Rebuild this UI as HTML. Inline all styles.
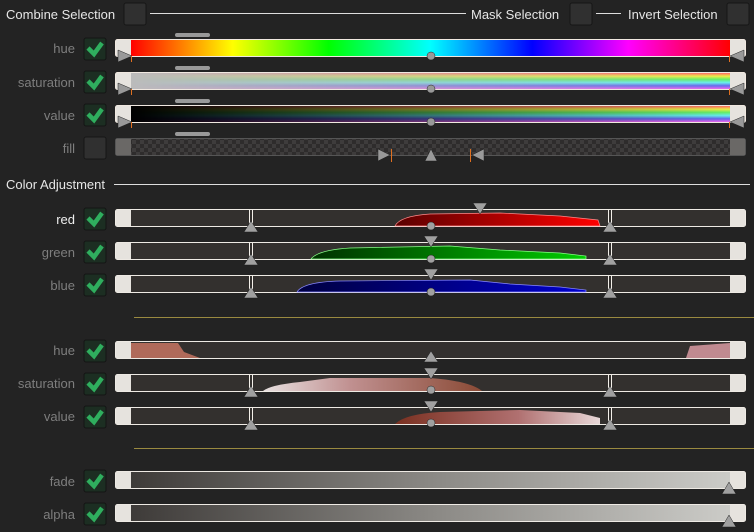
<!DOCTYPE html>
<html><head><meta charset="utf-8"><style>
html,body{margin:0;padding:0;background:#232323;width:754px;height:532px;overflow:hidden}
svg{display:block}
text{font-family:"Liberation Sans",sans-serif;font-size:13px}
</style></head><body>
<svg width="754" height="532" viewBox="0 0 754 532" xmlns="http://www.w3.org/2000/svg">
<defs>
<linearGradient id="hue" x1="0" x2="1"><stop offset="0" stop-color="#f00"/><stop offset=".17" stop-color="#ff0"/><stop offset=".33" stop-color="#0f0"/><stop offset=".5" stop-color="#0ff"/><stop offset=".67" stop-color="#00f"/><stop offset=".83" stop-color="#f0f"/><stop offset="1" stop-color="#f00"/></linearGradient>
<linearGradient id="rb" x1="0" y1="0" x2="0" y2="1"><stop offset="0" stop-color="#f66"/><stop offset=".2" stop-color="#ee4"/><stop offset=".4" stop-color="#6e6"/><stop offset=".6" stop-color="#6ee"/><stop offset=".8" stop-color="#66e"/><stop offset="1" stop-color="#e6e"/></linearGradient>
<linearGradient id="fadeL" x1="0" x2="1"><stop offset="0" stop-color="#bbb"/><stop offset="1" stop-color="#bbb" stop-opacity="0"/></linearGradient>
<linearGradient id="blk" x1="0" x2="1"><stop offset="0" stop-color="#000"/><stop offset="1" stop-color="#000" stop-opacity="0"/></linearGradient>
<linearGradient id="gray" x1="0" x2="1"><stop offset="0" stop-color="#3a3735"/><stop offset=".5" stop-color="#8a8884"/><stop offset="1" stop-color="#cfcfcb"/></linearGradient>
<linearGradient id="rd" x1="0" x2="1"><stop offset="0" stop-color="#5a0000"/><stop offset="1" stop-color="#f00"/></linearGradient>
<linearGradient id="gr" x1="0" x2="1"><stop offset="0" stop-color="#003000"/><stop offset="1" stop-color="#0c0"/></linearGradient>
<linearGradient id="bl" x1="0" x2="1"><stop offset="0" stop-color="#000040"/><stop offset="1" stop-color="#00c"/></linearGradient>
<linearGradient id="pk" x1="0" x2="1"><stop offset="0" stop-color="#7a3020"/><stop offset=".6" stop-color="#b07070"/><stop offset="1" stop-color="#e8d8d8"/></linearGradient>
<linearGradient id="pk2" x1="0" x2="1"><stop offset="0" stop-color="#e8e0e0"/><stop offset=".4" stop-color="#c09090"/><stop offset="1" stop-color="#8a4a35"/></linearGradient>
<pattern id="chk" width="8" height="8" patternUnits="userSpaceOnUse"><rect width="8" height="8" fill="#2e2c2c"/><rect width="4" height="4" fill="#3e3c3c"/><rect x="4" y="4" width="4" height="4" fill="#3e3c3c"/></pattern>
<g id="cb"><rect width="22" height="22" rx="2" fill="#1c2e22" stroke="#141414"/><path d="M4 10 L10 16 L18 5" stroke="#2fae5e" stroke-width="4.5" fill="none"/></g>
<g id="ub"><rect width="22" height="22" rx="2" fill="#303030" stroke="#161616"/></g>
</defs>

<text x="6" y="19" fill="#e6e6e6">Combine Selection</text>
<use href="#ub" x="124" y="3"/>
<line x1="150" y1="13.5" x2="466" y2="13.5" stroke="#ddd"/>
<text x="471" y="19" fill="#e6e6e6">Mask Selection</text>
<use href="#ub" x="570" y="3"/>
<line x1="596" y1="13.5" x2="621" y2="13.5" stroke="#ddd"/>
<text x="628" y="19" fill="#e6e6e6">Invert Selection</text>
<use href="#ub" x="727" y="3"/>

<g fill="#7e7e7e" text-anchor="end">
<text x="75" y="53">hue</text><text x="75" y="87">saturation</text><text x="75" y="120">value</text><text x="75" y="153">fill</text>
<text x="75" y="224" fill="#eee">red</text><text x="75" y="257">green</text><text x="75" y="290">blue</text>
<text x="75" y="355">hue</text><text x="75" y="388">saturation</text><text x="75" y="421">value</text>
<text x="75" y="486">fade</text><text x="75" y="519">alpha</text>
</g>
<use href="#cb" x="84" y="38"/><use href="#cb" x="84" y="71"/><use href="#cb" x="84" y="104"/><use href="#ub" x="84" y="137"/>
<use href="#cb" x="84" y="208"/><use href="#cb" x="84" y="241"/><use href="#cb" x="84" y="274"/>
<use href="#cb" x="84" y="340"/><use href="#cb" x="84" y="373"/><use href="#cb" x="84" y="406"/>
<use href="#cb" x="84" y="470"/><use href="#cb" x="84" y="503"/>

<text x="6" y="189" fill="#e6e6e6">Color Adjustment</text>
<line x1="114" y1="184.5" x2="750" y2="184.5" stroke="#ddd"/>
<line x1="134" y1="317.5" x2="754" y2="317.5" stroke="#9a8a40"/>
<line x1="134" y1="448.5" x2="754" y2="448.5" stroke="#9a8a40"/>

<g stroke="#f0e8e0" stroke-width="1">
<rect x="115.5" y="39.5" width="630" height="17" rx="2" fill="#e6e3de"/>
<rect x="115.5" y="72.5" width="630" height="17" rx="2" fill="#e6e3de"/>
<rect x="115.5" y="105.5" width="630" height="17" rx="2" fill="#e6e3de"/>
</g>
<rect x="131" y="40" width="599" height="16" fill="url(#hue)"/>
<rect x="131" y="73" width="599" height="16" fill="url(#rb)"/>
<rect x="131" y="73" width="599" height="16" fill="url(#fadeL)"/>
<rect x="131" y="106" width="599" height="16" fill="url(#rb)"/>
<rect x="131" y="106" width="599" height="16" fill="url(#blk)"/>
<rect x="115.5" y="138.5" width="630" height="17" rx="2" fill="url(#chk)" stroke="#555"/>
<rect x="116" y="139" width="15" height="16" fill="#6a6866"/>
<rect x="730" y="139" width="15" height="16" fill="#6a6866"/>
<g fill="#999"><rect x="175" y="33" width="35" height="4" rx="2"/><rect x="175" y="66" width="35" height="4" rx="2"/><rect x="175" y="99" width="35" height="4" rx="2"/><rect x="175" y="132" width="35" height="4" rx="2"/></g>
<g fill="#999" stroke="#222" stroke-width=".5">
<polygon points="118,50 132,56 118,62"/><polygon points="744,50 730,56 744,62"/>
<polygon points="118,83 132,89 118,95"/><polygon points="744,83 730,89 744,95"/>
<polygon points="118,116 132,122 118,128"/><polygon points="744,116 730,122 744,128"/>
<circle cx="431" cy="56" r="4"/><circle cx="431" cy="89" r="4"/><circle cx="431" cy="122" r="4"/>
<polygon points="378,149 390,155 378,161"/><polygon points="484,149 472,155 484,161"/><polygon points="425,161 437,161 431,149"/>
</g>
<g stroke="#e07020"><line x1="131.5" y1="56" x2="131.5" y2="62"/><line x1="729.5" y1="56" x2="729.5" y2="62"/><line x1="131.5" y1="89" x2="131.5" y2="95"/><line x1="729.5" y1="89" x2="729.5" y2="95"/><line x1="131.5" y1="122" x2="131.5" y2="128"/><line x1="729.5" y1="122" x2="729.5" y2="128"/><line x1="391.5" y1="149" x2="391.5" y2="162"/><line x1="470.5" y1="149" x2="470.5" y2="162"/></g>

<g stroke="#eeeae4" stroke-width="1">
<rect x="115.5" y="209.5" width="630" height="17" rx="2" fill="#33302e"/>
<rect x="115.5" y="242.5" width="630" height="17" rx="2" fill="#33302e"/>
<rect x="115.5" y="275.5" width="630" height="17" rx="2" fill="#33302e"/>
<rect x="115.5" y="341.5" width="630" height="17" rx="2" fill="#33302e"/>
<rect x="115.5" y="374.5" width="630" height="17" rx="2" fill="#33302e"/>
<rect x="115.5" y="407.5" width="630" height="17" rx="2" fill="#33302e"/>
<rect x="115.5" y="471.5" width="630" height="17" rx="2" fill="url(#gray)"/>
<rect x="115.5" y="504.5" width="630" height="17" rx="2" fill="url(#gray)"/>
</g>
<g fill="#e6e3de">
<rect x="116" y="210" width="15" height="16"/><rect x="730" y="210" width="15" height="16"/>
<rect x="116" y="243" width="15" height="16"/><rect x="730" y="243" width="15" height="16"/>
<rect x="116" y="276" width="15" height="16"/><rect x="730" y="276" width="15" height="16"/>
<rect x="116" y="342" width="15" height="16"/><rect x="730" y="342" width="15" height="16"/>
<rect x="116" y="375" width="15" height="16"/><rect x="730" y="375" width="15" height="16"/>
<rect x="116" y="408" width="15" height="16"/><rect x="730" y="408" width="15" height="16"/>
<rect x="116" y="472" width="15" height="16"/><rect x="730" y="472" width="15" height="16"/>
<rect x="116" y="505" width="15" height="16"/><rect x="730" y="505" width="15" height="16"/>
</g>
<path d="M395 226 Q400 216 430 214 L500 213 L560 216 L598 220 L600 226Z" fill="url(#rd)" stroke="#f88" stroke-width=".7"/>
<path d="M311 259 Q318 250 350 248 L450 246 L500 250 L560 253 L586 256 L586 259Z" fill="url(#gr)" stroke="#8f8" stroke-width=".7"/>
<path d="M297 292 Q303 282 340 281 L470 280 L510 284 L560 287 L586 290 L586 292Z" fill="url(#bl)" stroke="#88f" stroke-width=".7"/>
<path d="M131 343 L178 343 L184 352 L200 358 L131 358Z" fill="#b06a5a"/>
<path d="M686 358 L690 346 L730 343 L730 358Z" fill="#c08a90"/>
<path d="M263 391 Q270 385 300 382 L330 378 L430 378 Q470 381 482 391Z" fill="url(#pk2)"/>
<path d="M395 424 Q405 414 440 412 L520 410 L580 413 L600 418 L600 424Z" fill="url(#pk)"/>
<g stroke="#f4f0ea" stroke-width="1" fill="none">
<path d="M249.5 210 V226 M252.5 210 V226"/><path d="M608.5 210 V226 M611.5 210 V226"/>
<path d="M249.5 243 V259 M252.5 243 V259"/><path d="M608.5 243 V259 M611.5 243 V259"/>
<path d="M249.5 276 V292 M252.5 276 V292"/><path d="M608.5 276 V292 M611.5 276 V292"/>
<path d="M249.5 375 V391 M252.5 375 V391"/><path d="M608.5 375 V391 M611.5 375 V391"/>
<path d="M249.5 408 V424 M252.5 408 V424"/><path d="M608.5 408 V424 M611.5 408 V424"/>
</g>
<g fill="#a0a0a0" stroke="#222" stroke-width=".5">
<polygon points="244,232 258,232 251,221"/><polygon points="603,232 617,232 610,221"/>
<polygon points="473,203 487,203 480,214"/><circle cx="431" cy="226" r="4"/>
<polygon points="244,265 258,265 251,254"/><polygon points="603,265 617,265 610,254"/>
<polygon points="424,236 438,236 431,247"/><circle cx="431" cy="259" r="4"/>
<polygon points="244,298 258,298 251,287"/><polygon points="603,298 617,298 610,287"/>
<polygon points="424,269 438,269 431,280"/><circle cx="431" cy="292" r="4"/>
<polygon points="424,362 438,362 431,351"/><polygon points="424,368 438,368 431,379"/><circle cx="431" cy="390" r="4"/>
<polygon points="244,397 258,397 251,386"/><polygon points="603,397 617,397 610,386"/>
<polygon points="424,401 438,401 431,412"/><circle cx="431" cy="423" r="4"/>
<polygon points="244,430 258,430 251,419"/><polygon points="603,430 617,430 610,419"/>
<polygon points="722,494 736,494 729,482"/><polygon points="722,527 736,527 729,515"/>
</g>
</svg>
</body></html>
